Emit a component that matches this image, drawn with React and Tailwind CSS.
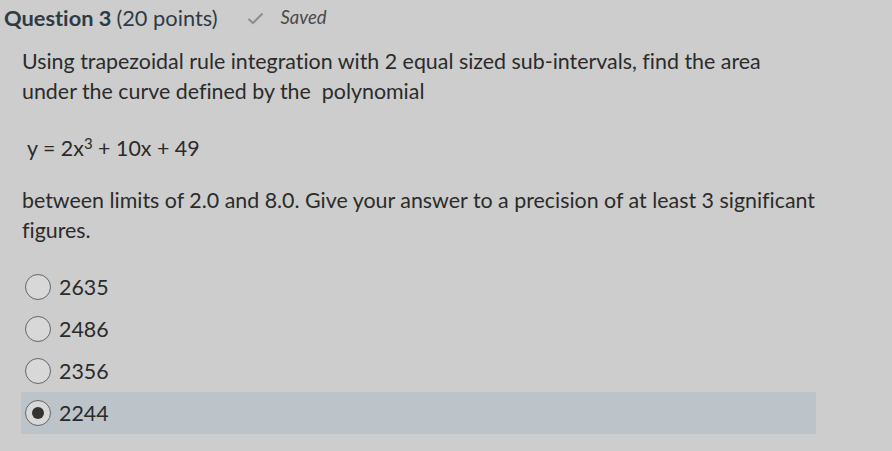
export default function App() {
  const opts = ["2635", "2486", "2356", "2244"];
  return (
    <div className="w-[892px] h-[451px] bg-[#cdcdcd] text-[#2b2b2b] overflow-hidden [font-variant-ligatures:none]" style={{ fontFamily: "Lato, 'Liberation Sans', sans-serif" }}>
      <div className="flex items-center h-[36px] pl-[4px]">
        <span className="text-[21.8px] font-bold text-[#2d3b45]">Question 3</span>
        <span className="text-[21.8px] ml-[5px] text-[#2d3b45]">(20 points)</span>
        <span className="ml-[30px] flex items-center">
          <svg width="17" height="13" viewBox="0 0 17 13"><path d="M1.5 7 L6 11 L15.5 1.5" fill="none" stroke="#8f8f8f" strokeWidth="2.2" /></svg>
        </span>
        <span className="ml-[16px] text-[18.5px] italic text-[#4a4a4a]">Saved</span>
      </div>
      <div className="pl-[22px] pt-[10px] text-[21.4px] leading-[30px]">
        <p>Using trapezoidal rule integration with 2 equal sized sub-intervals, find the area<br />under the curve defined by the&nbsp; polynomial</p>
        <p className="mt-[27px] pl-[5px]">y = 2x<sup className="text-[15px]">3</sup> + 10x + 49</p>
        <p className="mt-[22px]">between limits of 2.0 and 8.0. Give your answer to a precision of at least 3 significant<br />figures.</p>
      </div>
      <div className="mt-[21px] pl-[21px] w-[816px]">
        {opts.map((o, i) => (
          <div key={o} className={`flex items-center h-[42px] ${i === 3 ? "bg-[#bcc3c9]" : ""}`}>
            <span className="ml-[4px] w-[26px] h-[26px] rounded-full border border-[#666] bg-[#d8d8d8] flex items-center justify-center">
              {i === 3 && <span className="w-[12px] h-[12px] rounded-full bg-[#333]" />}
            </span>
            <span className="ml-[8px] text-[21.4px]">{o}</span>
          </div>
        ))}
      </div>
    </div>
  );
}
